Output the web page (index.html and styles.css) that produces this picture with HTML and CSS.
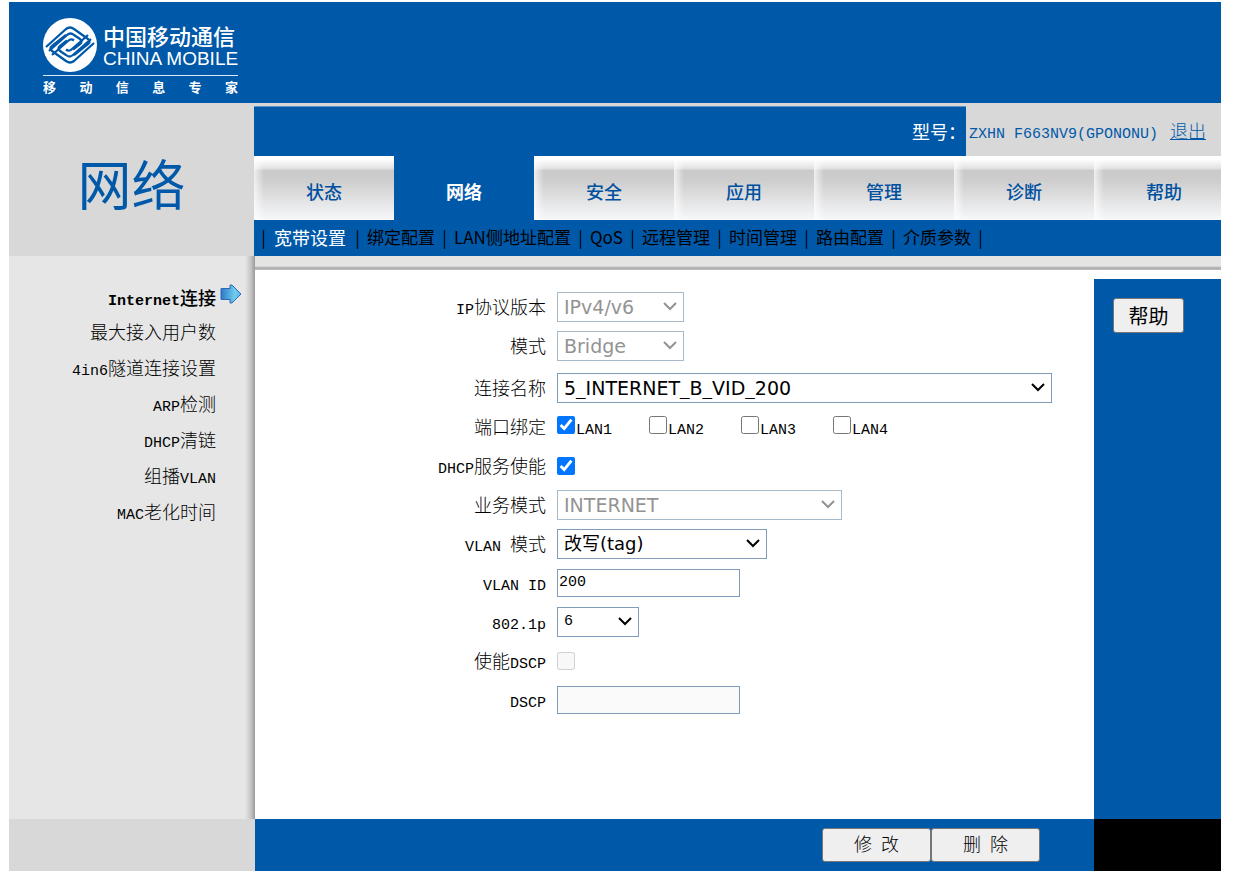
FILE: index.html
```html
<!DOCTYPE html>
<html lang="zh-CN">
<head>
    <meta charset="UTF-8">
    <meta name="viewport" content="width=device-width, initial-scale=1.0">
    <title>F663NV9</title>
    <link rel="stylesheet" href="styles.css">
</head>
<body>
    <div class="page">
        <header class="banner">
            <div class="logo">
                <div class="logo-top">
                    <svg class="logo-mark" viewBox="0 0 54 54" aria-hidden="true">
                        <circle cx="27" cy="27" r="27" fill="#fff"/>
                        <g fill="none" stroke="#0058a9" stroke-width="2.3" stroke-linejoin="round">
                            <path d="M3 29 L23 11 Q27 8 31 11 L45 21 Q48 24 45 26 L31 37"/>
                            <path d="M6 33 L24 17 Q27.500 14 31 17 L37 21 Q40 24 37 26 L30 31.500"/>
                            <path d="M9 37 L25 23 Q28 20 31 22.500"/>
                            <path d="M51 25 L31 43 Q27 46 23 43 L9 33 Q6 30 9 28 L23 17"/>
                            <path d="M48 21 L30 37 Q26.500 40 23 37 L17 33 Q14 30 17 28 L24 22.500"/>
                            <path d="M45 17 L29 31 Q26 34 23 31.500"/>
                        </g>
                    </svg>
                    <div class="logo-text">
                        <div class="logo-cn">中国移动通信</div>
                        <div class="logo-en">CHINA MOBILE</div>
                    </div>
                </div>
                <div class="slogan">
                    <span>移</span><span>动</span><span>信</span><span>息</span><span>专</span><span>家</span>
                </div>
            </div>
        </header>

        <div class="top">
            <h1 class="section-name">网络</h1>
            <div class="top-main">
                <div class="device">
                    <div class="device-label">型号：</div>
                    <div class="device-info">
                        <span class="en">ZXHN F663NV9(GPONONU)</span>
                        <a href="#logout">退出</a>
                    </div>
                </div>
                <nav class="tabs">
                    <a href="#status">状态</a>
                    <a href="#network" class="active">网络</a>
                    <a href="#security">安全</a>
                    <a href="#app">应用</a>
                    <a href="#manage">管理</a>
                    <a href="#diagnose">诊断</a>
                    <a href="#help">帮助</a>
                </nav>
                <nav class="subnav">
                    <span>|</span>
                    <a href="#wan" class="active">宽带设置</a><span>|</span>
                    <a href="#bind">绑定配置</a><span>|</span>
                    <a href="#lan">LAN侧地址配置</a><span>|</span>
                    <a href="#qos">QoS</a><span>|</span>
                    <a href="#remote">远程管理</a><span>|</span>
                    <a href="#time">时间管理</a><span>|</span>
                    <a href="#route">路由配置</a><span>|</span>
                    <a href="#media">介质参数</a><span>|</span>
                </nav>
            </div>
        </div>

        <div class="middle">
            <ul class="sidebar">
                <li class="active">
                    <a href="#internet"><span class="en">Internet</span>连接</a>
                    <svg class="arrow" viewBox="0 0 22 20" aria-hidden="true">
                        <defs>
                            <linearGradient id="arrowFill" x1="0" y1="0" x2="1" y2="0">
                                <stop offset="0" stop-color="#2b78c8"/>
                                <stop offset="0.700" stop-color="#6fcdee"/>
                                <stop offset="1" stop-color="#55b4e4"/>
                            </linearGradient>
                        </defs>
                        <path d="M1 4.500 H10 V1 H12 L21 10 L12 19 H10 V15.500 H1 Z" fill="url(#arrowFill)" stroke="#3468b5"/>
                    </svg>
                </li>
                <li><a href="#max-users">最大接入用户数</a></li>
                <li><a href="#tunnel"><span class="en">4in6</span>隧道连接设置</a></li>
                <li><a href="#arp"><span class="en">ARP</span>检测</a></li>
                <li><a href="#dhcp"><span class="en">DHCP</span>清链</a></li>
                <li><a href="#multicast">组播<span class="en">VLAN</span></a></li>
                <li><a href="#mac"><span class="en">MAC</span>老化时间</a></li>
            </ul>

            <div class="content">
                <form class="settings" id="wanForm">
                    <div class="row">
                        <label for="ipVersion"><span class="en">IP</span>协议版本</label>
                        <select id="ipVersion" class="w-small" disabled><option>IPv4/v6</option></select>
                    </div>
                    <div class="row">
                        <label for="mode">模式</label>
                        <select id="mode" class="w-small" disabled><option>Bridge</option></select>
                    </div>
                    <div class="row group">
                        <label for="connName">连接名称</label>
                        <select id="connName" class="w-full"><option>5_INTERNET_B_VID_200</option></select>
                    </div>
                    <div class="row">
                        <span class="row-label">端口绑定</span>
                        <div class="ports">
                            <label><input type="checkbox" checked><span class="en">LAN1</span></label>
                            <label><input type="checkbox"><span class="en">LAN2</span></label>
                            <label><input type="checkbox"><span class="en">LAN3</span></label>
                            <label><input type="checkbox"><span class="en">LAN4</span></label>
                        </div>
                    </div>
                    <div class="row">
                        <label for="dhcpEnable"><span class="en">DHCP</span>服务使能</label>
                        <input type="checkbox" id="dhcpEnable" checked>
                    </div>
                    <div class="row">
                        <label for="service">业务模式</label>
                        <select id="service" class="w-large" disabled><option>INTERNET</option></select>
                    </div>
                    <div class="row">
                        <label for="vlanMode"><span class="en">VLAN </span>模式</label>
                        <select id="vlanMode" class="w-medium"><option>改写(tag)</option></select>
                    </div>
                    <div class="row">
                        <label for="vlanId"><span class="en">VLAN ID</span></label>
                        <input type="text" id="vlanId" value="200">
                    </div>
                    <div class="row">
                        <label for="priority"><span class="en">802.1p</span></label>
                        <select id="priority" class="w-tiny"><option>6</option></select>
                    </div>
                    <div class="row">
                        <label for="dscpEnable">使能<span class="en">DSCP</span></label>
                        <input type="checkbox" id="dscpEnable" disabled>
                    </div>
                    <div class="row">
                        <label for="dscp"><span class="en">DSCP</span></label>
                        <input type="text" id="dscp" disabled>
                    </div>
                </form>
                <aside class="help">
                    <button type="button" class="help-button">帮助</button>
                </aside>
            </div>
        </div>

        <footer class="bottom">
            <div class="bottom-left"></div>
            <div class="actions">
                <button type="submit" form="wanForm">修&ensp;改</button>
                <button type="button">删&ensp;除</button>
            </div>
            <div class="bottom-right"></div>
        </footer>
    </div>
</body>
</html>
```
FILE: styles.css
```css
* {
    box-sizing: border-box;
}
body {
    margin: 2px 16px 0 9px;
    background: #fff;
    color: #000;
    font-family: "Noto Sans CJK SC", sans-serif;
    font-size: 18px;
    font-weight: 300;
    line-height: 24px;
}
a {
    color: inherit;
    text-decoration: none;
}
/* half-width latin text */
.en {
    font-family: "Liberation Mono", monospace;
    font-size: 15px;
    line-height: 1;
    white-space: pre;
}

/* Banner */
.banner {
    background: #0058a9;
    color: #fff;
    height: 101px;
    padding: 16px 0 0 34px;
}
.logo {
    width: 195px;
}
.logo-top {
    display: flex;
    gap: 6px;
    height: 57px;
}
.logo-mark {
    width: 54px;
    height: 54px;
    flex: none;
}
.logo-text {
    padding-top: 4px;
    white-space: nowrap;
}
.logo-cn {
    font-size: 22px;
    font-weight: 500;
    line-height: 26px;
}
.logo-en {
    font-family: "Liberation Sans", Arial, sans-serif;
    font-size: 19px;
    line-height: 22px;
}
.slogan {
    display: flex;
    justify-content: space-between;
    border-top: 1px solid #dce8f3;
    padding-top: 2px;
    font-size: 13px;
    font-weight: 700;
    line-height: 18px;
}

/* Section name, tabs and sub menu */
.top {
    display: flex;
    background: #d8d8d8;
}
.section-name {
    width: 245px;
    flex: none;
    margin: 0;
    padding-top: 42px;
    text-align: center;
    color: #0058a9;
    font-size: 54px;
    font-weight: 400;
    line-height: 76px;
}
.top-main {
    flex: 1;
    min-width: 0;
    padding-top: 3px;
}
.device {
    display: flex;
    height: 50px;
    line-height: 48px;
}
.device-label {
    flex: 1;
    background: #0058a9;
    border-top: 1px solid #5a94c6;
    color: #fff;
    font-weight: 400;
    text-align: right;
}
.device-info {
    display: flex;
    align-items: baseline;
    justify-content: space-between;
    width: 255px;
    padding: 0 15px 0 3px;
    color: #0058a9;
}
.device-info a {
    text-decoration: underline;
}
.tabs {
    display: flex;
    overflow: hidden;
    height: 64px;
}
.tabs a {
    flex: 0 0 140px;
    padding-top: 8px;
    background: linear-gradient(to right, rgba(255, 255, 255, 0.7), rgba(255, 255, 255, 0) 10px),
        linear-gradient(#fff 0, #fff 3px, #e0e0e0 13px, #cacaca 14px, #cdcdcd 24px, #f7f8fa 100%);
    color: #0050a0;
    font-weight: 500;
    line-height: 54px;
    text-align: center;
}
.tabs a.active {
    background: #0058a9;
    color: #fff;
    font-weight: 700;
}
.subnav {
    display: flex;
    height: 36px;
    background: #0058a9;
    color: #000;
    font-size: 17px;
    font-weight: 400;
    line-height: 34px;
    white-space: nowrap;
}
.subnav span {
    width: 19px;
    text-align: center;
}
.subnav .active {
    padding: 0 2px 0 1px;
    color: #fff;
    font-size: 18px;
}

/* Middle part */
.middle {
    display: flex;
    min-height: 563px;
}
.sidebar {
    width: 246px;
    flex: none;
    margin: 0;
    padding: 24px 4px 0 0;
    list-style: none;
    background: linear-gradient(to right, rgba(230, 230, 230, 0), #c4c4c4 60%, #999) right / 10px 100% no-repeat, #e6e6e6;
}
.sidebar li {
    display: flex;
    align-items: center;
    justify-content: flex-end;
    height: 36px;
    padding: 0 35px 2px 0;
}
.sidebar li.active {
    height: 34px;
    padding: 0 9px 0 0;
    font-weight: 500;
}
.sidebar li.active .en {
    font-weight: 700;
}
.arrow {
    width: 22px;
    height: 20px;
    margin: 0 0 6px 4px;
}
.content {
    display: flex;
    flex: 1;
    min-width: 0;
    padding-top: 14px;
    background: linear-gradient(#e4e4e2 0, #e4e4e2 10px, #a8a8a8 12px, #c4c4c4 14px) top / 100% 14px no-repeat, #fff;
}
.settings {
    flex: 1;
    padding-top: 17px;
}
.row {
    display: grid;
    grid-template-columns: 291px 1fr;
    column-gap: 11px;
    align-items: center;
    justify-items: start;
    height: 39px;
}
.row.group {
    margin-top: 3px;
}
.row > label,
.row-label {
    justify-self: end;
    padding-bottom: 2px;
}
select,
input[type="text"] {
    margin: 0;
    border: 1px solid #7f9db9;
    border-radius: 0;
    background-color: #fff;
    color: #000;
    font-family: "DejaVu Sans", "Noto Sans CJK SC", sans-serif;
    font-size: 19px;
}
select {
    appearance: none;
    height: 30px;
    padding: 0 26px 0 6px;
    background-image: url("data:image/svg+xml,%3Csvg xmlns='http://www.w3.org/2000/svg' width='14' height='9'%3E%3Cpath d='M1 1l6 6 6-6' fill='none' stroke='%23000' stroke-width='2'/%3E%3C/svg%3E");
    background-repeat: no-repeat;
    background-position: right 6px center;
}
select:disabled {
    opacity: 0.7;
    color: #666;
    background-image: url("data:image/svg+xml,%3Csvg xmlns='http://www.w3.org/2000/svg' width='14' height='9'%3E%3Cpath d='M1 1l6 6 6-6' fill='none' stroke='%23666' stroke-width='2'/%3E%3C/svg%3E");
}
input[type="text"] {
    width: 183px;
    height: 28px;
    padding: 0 1px;
    font-family: "Liberation Mono", monospace;
    font-size: 15px;
}
input[type="text"]:disabled {
    background-color: #fafafa;
}
input[type="checkbox"] {
    width: 18px;
    height: 18px;
    margin: 0;
}
select.w-tiny {
    width: 82px;
    font-family: "Liberation Mono", monospace;
    font-size: 15px;
}
.w-small {
    width: 127px;
}
select.w-medium {
    width: 210px;
    font-size: 18px;
}
.w-large {
    width: 285px;
}
.w-full {
    width: 495px;
}
.ports {
    display: flex;
}
.ports label {
    display: flex;
    width: 92px;
}
.ports .en {
    padding: 7px 0 0 1px;
}
.help {
    width: 127px;
    flex: none;
    margin-top: 9px;
    padding: 19px;
    background: #0058a9;
}
button {
    border: 1px solid #767676;
    border-radius: 3px;
    background: #efefef;
    color: #000;
    font-family: "Noto Sans CJK SC", sans-serif;
    font-weight: 300;
}
.help-button {
    width: 71px;
    height: 35px;
    padding: 0;
    font-size: 20px;
    font-weight: 400;
    line-height: 24px;
}

/* Bottom bar */
.bottom {
    display: flex;
    height: 52px;
}
.bottom-left {
    width: 246px;
    background: #d8d8d8;
}
.actions {
    display: flex;
    flex: 1;
    align-items: center;
    justify-content: flex-end;
    padding-right: 54px;
    background: #0058a9;
}
.actions button {
    width: 109px;
    height: 34px;
    padding: 0 6px 4px;
    font-size: 18px;
    line-height: 24px;
}
.bottom-right {
    width: 127px;
    background: #000;
}
```
